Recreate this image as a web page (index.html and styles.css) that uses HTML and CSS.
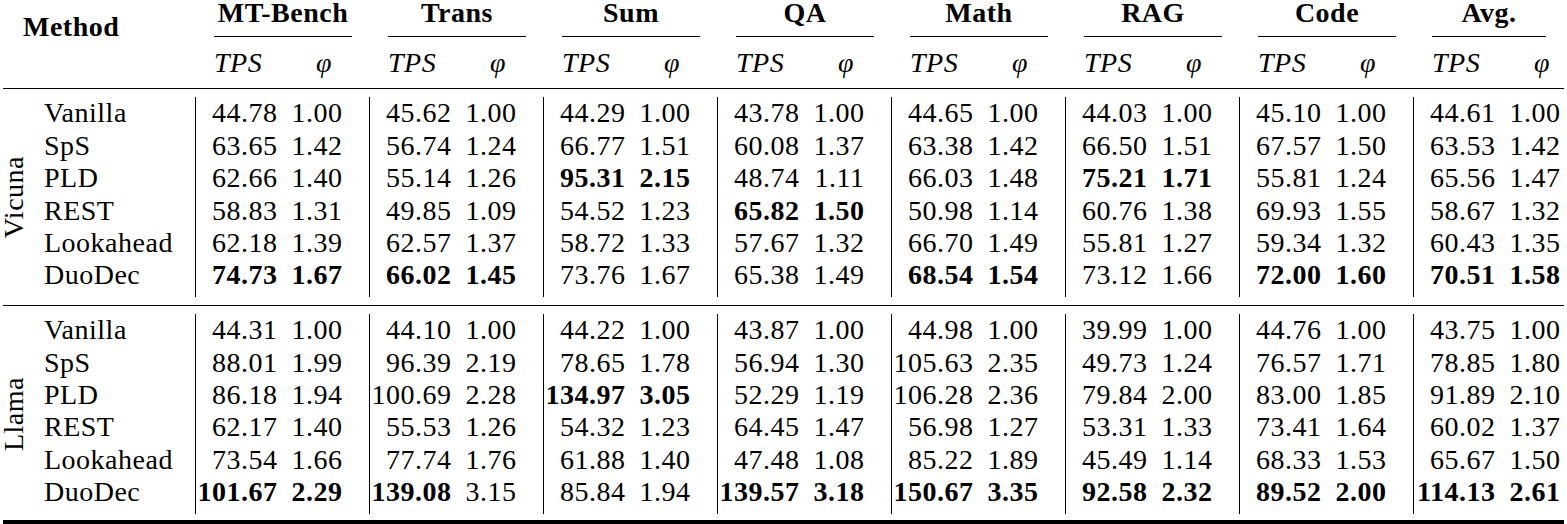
FILE: index.html
```html
<!DOCTYPE html>
<html lang="en">
  <head>
    <meta charset="UTF-8" />
    <meta name="viewport" content="width=device-width, initial-scale=1.0" />
    <title>Speedup results</title>
    <link rel="stylesheet" href="styles.css">
  </head>
  <body>
    <div class="table">
      <div class="head">
        <div class="method-head">Method</div>
        <div class="title"><span>MT-Bench</span><div class="cmid"></div></div>
        <div class="title"><span>Trans</span><div class="cmid"></div></div>
        <div class="title"><span>Sum</span><div class="cmid"></div></div>
        <div class="title"><span>QA</span><div class="cmid"></div></div>
        <div class="title"><span>Math</span><div class="cmid"></div></div>
        <div class="title"><span>RAG</span><div class="cmid"></div></div>
        <div class="title"><span>Code</span><div class="cmid"></div></div>
        <div class="title"><span>Avg.</span><div class="cmid"></div></div>
        <div class="sub">TPS</div><div class="sub phi">φ</div>
        <div class="sub">TPS</div><div class="sub phi">φ</div>
        <div class="sub">TPS</div><div class="sub phi">φ</div>
        <div class="sub">TPS</div><div class="sub phi">φ</div>
        <div class="sub">TPS</div><div class="sub phi">φ</div>
        <div class="sub">TPS</div><div class="sub phi">φ</div>
        <div class="sub">TPS</div><div class="sub phi">φ</div>
        <div class="sub">TPS</div><div class="sub phi">φ</div>
      </div>

      <div class="rule"></div>

      <div class="block">
        <div class="row">
          <div class="label"><span>Vicuna</span></div>
          <div class="m">Vanilla</div>
          <div class="n">44.78</div><div class="r">1.00</div>
          <div class="n">45.62</div><div class="r">1.00</div>
          <div class="n">44.29</div><div class="r">1.00</div>
          <div class="n">43.78</div><div class="r">1.00</div>
          <div class="n">44.65</div><div class="r">1.00</div>
          <div class="n">44.03</div><div class="r">1.00</div>
          <div class="n">45.10</div><div class="r">1.00</div>
          <div class="n">44.61</div><div class="r">1.00</div>
        </div>
        <div class="row">
          <div class="m">SpS</div>
          <div class="n">63.65</div><div class="r">1.42</div>
          <div class="n">56.74</div><div class="r">1.24</div>
          <div class="n">66.77</div><div class="r">1.51</div>
          <div class="n">60.08</div><div class="r">1.37</div>
          <div class="n">63.38</div><div class="r">1.42</div>
          <div class="n">66.50</div><div class="r">1.51</div>
          <div class="n">67.57</div><div class="r">1.50</div>
          <div class="n">63.53</div><div class="r">1.42</div>
        </div>
        <div class="row">
          <div class="m">PLD</div>
          <div class="n">62.66</div><div class="r">1.40</div>
          <div class="n">55.14</div><div class="r">1.26</div>
          <div class="n b">95.31</div><div class="r b">2.15</div>
          <div class="n">48.74</div><div class="r">1.11</div>
          <div class="n">66.03</div><div class="r">1.48</div>
          <div class="n b">75.21</div><div class="r b">1.71</div>
          <div class="n">55.81</div><div class="r">1.24</div>
          <div class="n">65.56</div><div class="r">1.47</div>
        </div>
        <div class="row">
          <div class="m">REST</div>
          <div class="n">58.83</div><div class="r">1.31</div>
          <div class="n">49.85</div><div class="r">1.09</div>
          <div class="n">54.52</div><div class="r">1.23</div>
          <div class="n b">65.82</div><div class="r b">1.50</div>
          <div class="n">50.98</div><div class="r">1.14</div>
          <div class="n">60.76</div><div class="r">1.38</div>
          <div class="n">69.93</div><div class="r">1.55</div>
          <div class="n">58.67</div><div class="r">1.32</div>
        </div>
        <div class="row">
          <div class="m">Lookahead</div>
          <div class="n">62.18</div><div class="r">1.39</div>
          <div class="n">62.57</div><div class="r">1.37</div>
          <div class="n">58.72</div><div class="r">1.33</div>
          <div class="n">57.67</div><div class="r">1.32</div>
          <div class="n">66.70</div><div class="r">1.49</div>
          <div class="n">55.81</div><div class="r">1.27</div>
          <div class="n">59.34</div><div class="r">1.32</div>
          <div class="n">60.43</div><div class="r">1.35</div>
        </div>
        <div class="row">
          <div class="m">DuoDec</div>
          <div class="n b">74.73</div><div class="r b">1.67</div>
          <div class="n b">66.02</div><div class="r b">1.45</div>
          <div class="n">73.76</div><div class="r">1.67</div>
          <div class="n">65.38</div><div class="r">1.49</div>
          <div class="n b">68.54</div><div class="r b">1.54</div>
          <div class="n">73.12</div><div class="r">1.66</div>
          <div class="n b">72.00</div><div class="r b">1.60</div>
          <div class="n b">70.51</div><div class="r b">1.58</div>
        </div>
      </div>

      <div class="rule mid"></div>

      <div class="block">
        <div class="row">
          <div class="label"><span>Llama</span></div>
          <div class="m">Vanilla</div>
          <div class="n">44.31</div><div class="r">1.00</div>
          <div class="n">44.10</div><div class="r">1.00</div>
          <div class="n">44.22</div><div class="r">1.00</div>
          <div class="n">43.87</div><div class="r">1.00</div>
          <div class="n">44.98</div><div class="r">1.00</div>
          <div class="n">39.99</div><div class="r">1.00</div>
          <div class="n">44.76</div><div class="r">1.00</div>
          <div class="n">43.75</div><div class="r">1.00</div>
        </div>
        <div class="row">
          <div class="m">SpS</div>
          <div class="n">88.01</div><div class="r">1.99</div>
          <div class="n">96.39</div><div class="r">2.19</div>
          <div class="n">78.65</div><div class="r">1.78</div>
          <div class="n">56.94</div><div class="r">1.30</div>
          <div class="n">105.63</div><div class="r">2.35</div>
          <div class="n">49.73</div><div class="r">1.24</div>
          <div class="n">76.57</div><div class="r">1.71</div>
          <div class="n">78.85</div><div class="r">1.80</div>
        </div>
        <div class="row">
          <div class="m">PLD</div>
          <div class="n">86.18</div><div class="r">1.94</div>
          <div class="n">100.69</div><div class="r">2.28</div>
          <div class="n b">134.97</div><div class="r b">3.05</div>
          <div class="n">52.29</div><div class="r">1.19</div>
          <div class="n">106.28</div><div class="r">2.36</div>
          <div class="n">79.84</div><div class="r">2.00</div>
          <div class="n">83.00</div><div class="r">1.85</div>
          <div class="n">91.89</div><div class="r">2.10</div>
        </div>
        <div class="row">
          <div class="m">REST</div>
          <div class="n">62.17</div><div class="r">1.40</div>
          <div class="n">55.53</div><div class="r">1.26</div>
          <div class="n">54.32</div><div class="r">1.23</div>
          <div class="n">64.45</div><div class="r">1.47</div>
          <div class="n">56.98</div><div class="r">1.27</div>
          <div class="n">53.31</div><div class="r">1.33</div>
          <div class="n">73.41</div><div class="r">1.64</div>
          <div class="n">60.02</div><div class="r">1.37</div>
        </div>
        <div class="row">
          <div class="m">Lookahead</div>
          <div class="n">73.54</div><div class="r">1.66</div>
          <div class="n">77.74</div><div class="r">1.76</div>
          <div class="n">61.88</div><div class="r">1.40</div>
          <div class="n">47.48</div><div class="r">1.08</div>
          <div class="n">85.22</div><div class="r">1.89</div>
          <div class="n">45.49</div><div class="r">1.14</div>
          <div class="n">68.33</div><div class="r">1.53</div>
          <div class="n">65.67</div><div class="r">1.50</div>
        </div>
        <div class="row">
          <div class="m">DuoDec</div>
          <div class="n b">101.67</div><div class="r b">2.29</div>
          <div class="n b">139.08</div><div class="r">3.15</div>
          <div class="n">85.84</div><div class="r">1.94</div>
          <div class="n b">139.57</div><div class="r b">3.18</div>
          <div class="n b">150.67</div><div class="r b">3.35</div>
          <div class="n b">92.58</div><div class="r b">2.32</div>
          <div class="n b">89.52</div><div class="r b">2.00</div>
          <div class="n b">114.13</div><div class="r b">2.61</div>
        </div>
      </div>

      <div class="rule bottom"></div>
    </div>
  </body>
</html>
```

FILE: styles.css
```css
* {
  margin: 0;
  padding: 0;
  box-sizing: border-box;
}

body {
  background: #fff;
  color: #000;
  font-family: "Liberation Serif", "Times New Roman", serif;
  font-size: 28px;
  letter-spacing: 0.5px;
}

.table {
  width: 1567px;
}

.head,
.block {
  display: grid;
  grid-template-columns: 36px 159px repeat(7, 96px 78px) 96px 54px;
}

.head {
  grid-template-rows: 46.5px 32.4px;
}

.method-head {
  grid-column: 1 / 3;
  grid-row: 1 / 3;
  font-weight: bold;
  line-height: 32.4px;
  padding: 11px 0 0 23px;
}

.title {
  grid-column: span 2;
  font-weight: bold;
  line-height: 26px;
}
.title span {
  display: block;
  text-align: center;
  padding: 0 17px 0 19px;
}
.cmid {
  height: 1px;
  background: #000;
  margin: 10px 17px 0 19px;
}

.sub {
  font-style: italic;
  line-height: 32.4px;
  padding-left: 19px;
}
.sub.phi {
  padding-left: 25px;
}

.rule {
  width: 1561px;
  height: 1px;
  margin: 9.1px 0 0 3px;
  background: #000;
}
.rule.mid {
  margin-top: 8.25px;
}
.rule.bottom {
  height: 4px;
  margin-top: 6.25px;
}

.block {
  grid-template-rows: repeat(5, 32.4px) 37.4px;
  line-height: 32.4px;
  margin-top: 8.35px;
}
.row {
  display: contents;
}

.label {
  grid-column: 1;
  grid-row: 1 / span 6;
  display: flex;
  align-items: center;
}
.label span {
  writing-mode: vertical-rl;
  transform: rotate(180deg);
  line-height: 28px;
}

.m {
  padding-left: 8px;
}
.n {
  border-left: 1px solid #000;
  text-align: right;
  padding-right: 13.5px;
}
.r {
  text-align: right;
  padding-right: 26.5px;
}
.row > .r:last-child {
  padding-right: 2.5px;
}
.b {
  font-weight: bold;
}
```
